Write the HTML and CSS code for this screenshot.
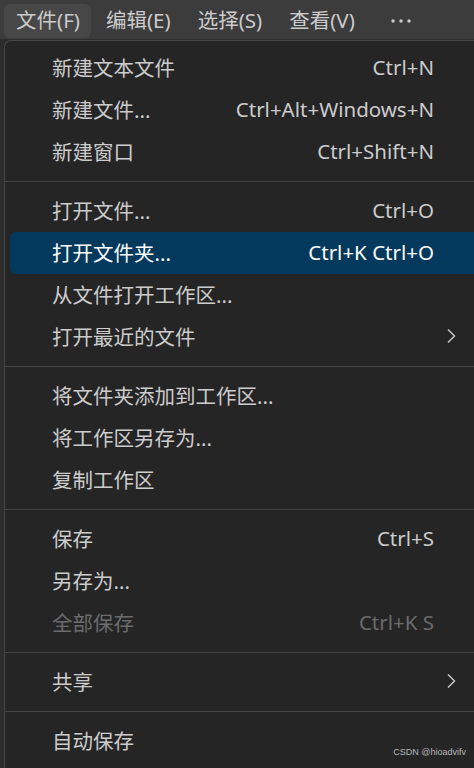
FILE: index.html
```html
<!DOCTYPE html>
<html lang="zh-CN">
<head>
  <meta charset="UTF-8">
  <title>文件菜单</title>
  <link rel="stylesheet" href="styles.css">
</head>
<body>
  <div class="menubar">
    <span class="menubar-item active">文件(F)</span>
    <span class="menubar-item">编辑(E)</span>
    <span class="menubar-item">选择(S)</span>
    <span class="menubar-item">查看(V)</span>
    <span class="menubar-item more">
      <svg width="22" height="6" viewBox="0 0 22 6"><circle cx="3" cy="3" r="1.7" fill="#cccccc"/><circle cx="11" cy="3" r="1.7" fill="#cccccc"/><circle cx="19" cy="3" r="1.7" fill="#cccccc"/></svg>
    </span>
  </div>

  <div class="menu">
    <div class="row"><span class="label">新建文本文件</span><span class="key">Ctrl+N</span></div>
    <div class="row"><span class="label">新建文件...</span><span class="key">Ctrl+Alt+Windows+N</span></div>
    <div class="row"><span class="label">新建窗口</span><span class="key">Ctrl+Shift+N</span></div>
    <div class="sep"></div>
    <div class="row"><span class="label">打开文件...</span><span class="key">Ctrl+O</span></div>
    <div class="row selected"><span class="label">打开文件夹...</span><span class="key">Ctrl+K Ctrl+O</span></div>
    <div class="row"><span class="label">从文件打开工作区...</span></div>
    <div class="row"><span class="label">打开最近的文件</span><span class="sub">
      <svg width="10" height="16" viewBox="0 0 10 16"><path d="M2 1.5 L8.5 8 L2 14.5" fill="none" stroke="#cccccc" stroke-width="1.4"/></svg>
    </span></div>
    <div class="sep"></div>
    <div class="row"><span class="label">将文件夹添加到工作区...</span></div>
    <div class="row"><span class="label">将工作区另存为...</span></div>
    <div class="row"><span class="label">复制工作区</span></div>
    <div class="sep"></div>
    <div class="row"><span class="label">保存</span><span class="key">Ctrl+S</span></div>
    <div class="row"><span class="label">另存为...</span></div>
    <div class="row disabled"><span class="label">全部保存</span><span class="key">Ctrl+K S</span></div>
    <div class="sep"></div>
    <div class="row"><span class="label">共享</span><span class="sub">
      <svg width="10" height="16" viewBox="0 0 10 16"><path d="M2 1.5 L8.5 8 L2 14.5" fill="none" stroke="#cccccc" stroke-width="1.4"/></svg>
    </span></div>
    <div class="sep"></div>
    <div class="row"><span class="label">自动保存</span></div>
  </div>

  <div class="watermark">CSDN @hioadvifv</div>
</body>
</html>
```

FILE: styles.css
```css
* {
  box-sizing: border-box;
}

html,
body {
  height: 100%;
}

body {
  margin: 0;
  background: #2c2c2c;
  font-family: "Noto Sans", "Noto Sans CJK SC", sans-serif;
  color: #cccccc;
  overflow: hidden;
  position: relative;
}

.menubar {
  height: 39px;
  background: #3c3c3c;
  display: flex;
  align-items: flex-start;
  padding: 4px 4px 0;
}

.menubar-item {
  font-size: 20.5px;
  line-height: 33px;
  height: 34px;
  padding: 0 12px;
  margin-right: 3px;
  border-radius: 6px;
  color: #cccccc;
  white-space: nowrap;
}

.menubar-item.active {
  background: #474747;
  padding-right: 11px;
}

.menubar-item.more {
  margin-left: 8px;
  display: flex;
  align-items: center;
}

.menu {
  margin-left: 4px;
  margin-top: 1px;
  height: 740px;
  background: #252526;
  border-left: 1px solid #454545;
  border-top: 1px solid #454545;
  border-radius: 7px 0 0 0;
  padding: 6px 0 8px 5px;
}

.row {
  height: 42px;
  display: grid;
  grid-template-columns: 1fr auto 40px;
  align-items: center;
  padding-left: 42px;
  padding-bottom: 2px;
  font-size: 20.5px;
  border-radius: 6px 0 0 6px;
  white-space: nowrap;
}

.row .label {
  grid-column: 1;
}

.row .key {
  grid-column: 2;
}

.row .sub {
  grid-column: 3;
  padding-left: 12px;
  display: flex;
  align-items: center;
}

.row.selected {
  background: #04395e;
  color: #ffffff;
}

.row.disabled {
  color: #6b6b6b;
}

.sep {
  height: 17px;
  margin-left: -5px;
  display: flex;
  align-items: center;
}

.sep::after {
  content: "";
  display: block;
  width: 100%;
  height: 1px;
  background: #454545;
}

.watermark {
  position: absolute;
  right: 8px;
  bottom: 11px;
  font-family: "Liberation Sans", sans-serif;
  font-size: 9px;
  color: #b8b8b8;
}
```
